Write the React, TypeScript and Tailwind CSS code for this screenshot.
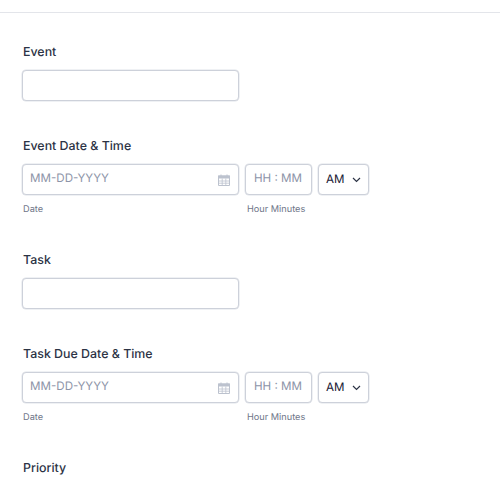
import React from "react";

const Label = ({ children }: { children: React.ReactNode }) => (
  <div className="pl-[23px] text-[12.4px] leading-[16px] font-medium text-[#2c3345]">{children}</div>
);

const CalIcon = () => (
  <svg width="12" height="12" viewBox="0 0 12 12" fill="none" className="shrink-0">
    <path d="M0.5 2h11v9.5h-11z" stroke="#bcc2ce" strokeWidth="1" />
    <path d="M0 1.5h12v3H0z" fill="#bcc2ce" />
    <path d="M3 0.5v2M9 0.5v2" stroke="#bcc2ce" />
    <path d="M0.5 7h11M0.5 9.2h11M4.2 4.5v7M7.8 4.5v7" stroke="#bcc2ce" strokeWidth="0.8" />
  </svg>
);

const Chevron = () => (
  <svg width="9" height="6" viewBox="0 0 9 6" fill="none" className="shrink-0">
    <path d="M1 1l3.5 3.5L8 1" stroke="#2c3345" strokeWidth="1.2" />
  </svg>
);

const box = "h-[31px] rounded-[4px] border border-[#cdd1da] shadow-[0_0_0_0.5px_#e0e3e9] bg-white flex items-center";

const DateRow = () => (
  <>
    <div className="flex pl-[22px] mt-[10px] gap-[6px]">
      <div className={`${box} w-[217px] pl-[7px] pr-[8px] justify-between`}>
        <span className="text-[11.6px] text-[#8d94a8] pb-px">MM-DD-YYYY</span>
        <CalIcon />
      </div>
      <div className={`${box} w-[67px] pl-[8px]`}>
        <span className="text-[11.6px] text-[#8d94a8] whitespace-nowrap pb-px">HH : MM</span>
      </div>
      <div className={`${box} w-[51px] pl-[7px] gap-[8px]`}>
        <span className="text-[11.6px] text-[#1a2035]">AM</span>
        <Chevron />
      </div>
    </div>
    <div className="flex mt-[9px] mb-[-1px] text-[9.2px] leading-[12px] text-[#6f7689]">
      <span className="pl-[23px] w-[247px]">Date</span>
      <span>Hour Minutes</span>
    </div>
  </>
);

const TextBox = () => (
  <div className="pl-[22px] mt-[10px]">
    <div className={`${box} w-[217px]`} />
  </div>
);

export default function App() {
  return (
    <div className="w-[500px] h-[484px] overflow-hidden bg-white font-['Inter',sans-serif] [text-rendering:geometricPrecision]">
      <div className="h-[13px] border-b border-[#e3e5ea]" />
      <div className="pt-[31px]">
        <Label>Event</Label>
        <TextBox />
      </div>
      <div className="pt-[37px]">
        <Label>Event Date &amp; Time</Label>
        <DateRow />
      </div>
      <div className="pt-[37px]">
        <Label>Task</Label>
        <TextBox />
      </div>
      <div className="pt-[37px]">
        <Label>Task Due Date &amp; Time</Label>
        <DateRow />
      </div>
      <div className="pt-[37px]">
        <Label>Priority</Label>
      </div>
    </div>
  );
}
